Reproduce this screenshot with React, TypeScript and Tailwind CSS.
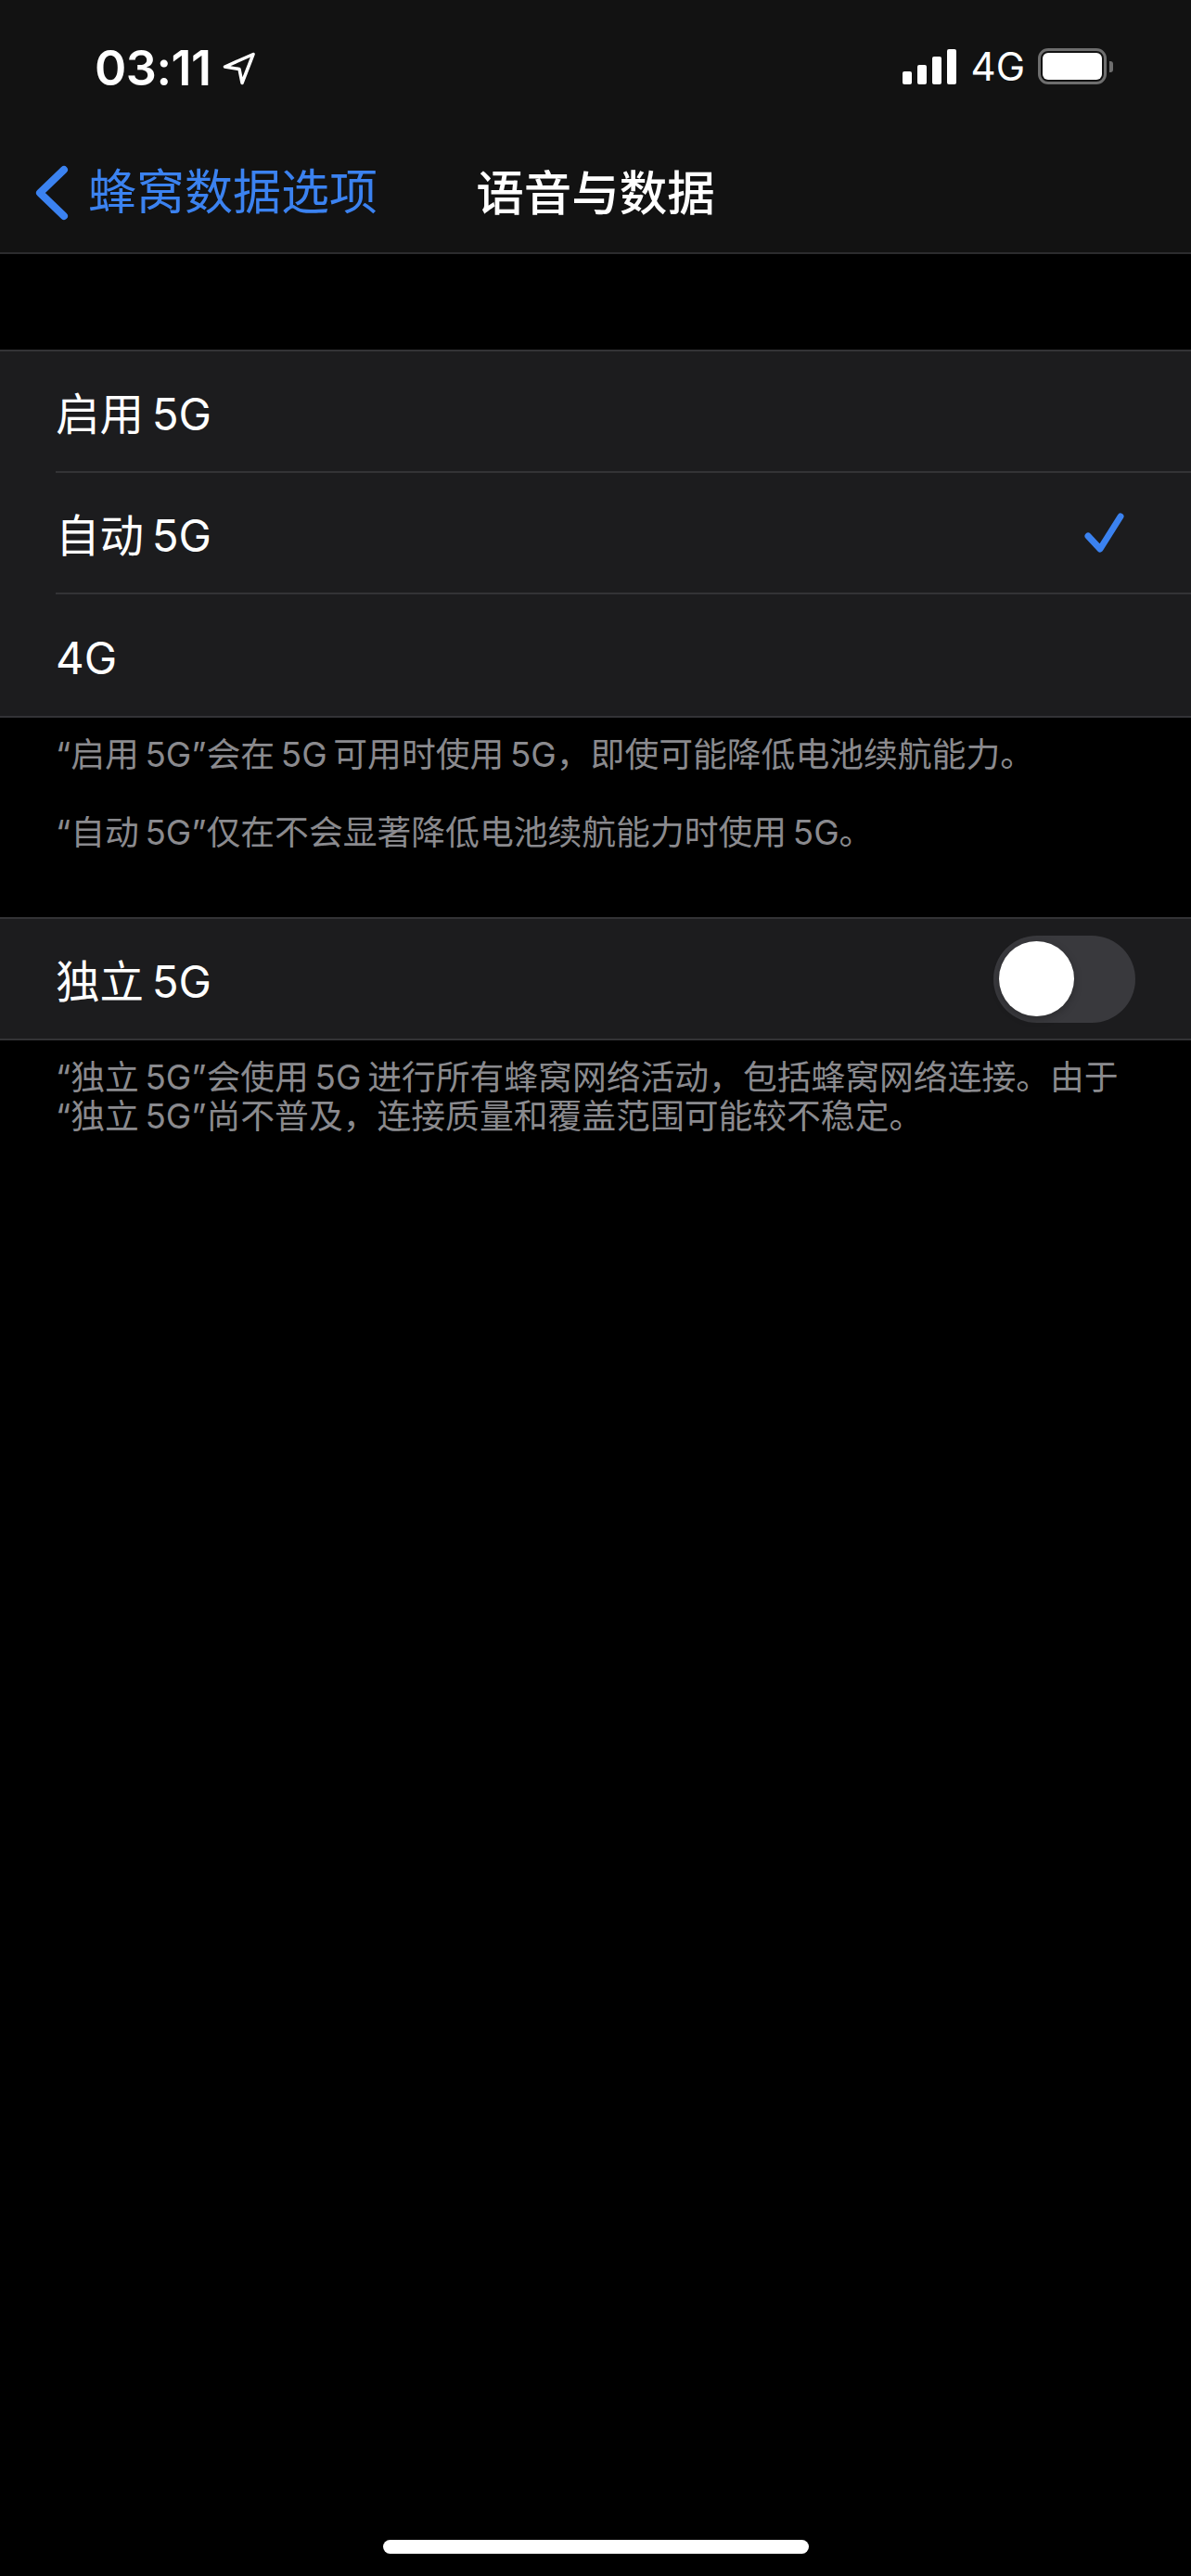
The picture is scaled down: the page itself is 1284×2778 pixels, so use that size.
import React from "react";

const THIN = "\u2009";

const Row = ({
  label,
  last,
  short,
  children,
}: {
  label: string;
  last?: boolean;
  short?: boolean;
  children?: React.ReactNode;
}) => (
  <div className="pl-[60px]">
    <div
      className={`flex items-center justify-between pr-[60px] text-[47.5px] text-white ${
        short ? "h-[129px]" : "h-[131px]"
      } ${last ? "" : "border-b-2 border-[#333336]"}`}
    >
      <span className="pt-[6px]">{label}</span>
      {children}
    </div>
  </div>
);

const Footnote = ({ children }: { children: React.ReactNode }) => (
  <p className="pl-[60px] text-[36.8px] leading-[42px] text-[#8a8a8e]">{children}</p>
);

const StatusBar = () => (
  <div className="flex h-[144px] items-start justify-between pl-[102px] pr-[84px] pt-[52px] text-white">
    <div className="flex items-center gap-[12px]">
      <span className="text-[52px] font-semibold leading-[44px] tracking-[-0.5px]">03:11</span>
      <svg width="38" height="38" viewBox="0 0 38 38" fill="none">
        <path
          d="M34 3.5 3.5 17 19 19.5l3 15Z"
          stroke="white"
          strokeWidth="3.5"
          strokeLinejoin="round"
        />
      </svg>
    </div>
    <div className="flex items-center">
      <div className="flex h-[38px] items-end gap-[6px]">
        <div className="h-[14px] w-[10px] rounded-[2px] bg-white" />
        <div className="h-[21px] w-[10px] rounded-[2px] bg-white" />
        <div className="h-[30px] w-[10px] rounded-[2px] bg-white" />
        <div className="h-[38px] w-[10px] rounded-[2px] bg-white" />
      </div>
      <span className="ml-[16px] text-[42px] leading-[38px]">4G</span>
      <div className="ml-[14px] flex items-center">
        <div className="h-[39px] w-[74px] rounded-[11px] border-[3px] border-[#6e6e6e] p-[2px]">
          <div className="h-full w-full rounded-[6px] bg-white" />
        </div>
        <div className="ml-[3px] h-[12px] w-[4px] rounded-r-[3px] bg-[#6e6e6e]" />
      </div>
    </div>
  </div>
);

const NavBar = () => (
  <div className="grid h-[130px] grid-cols-[1fr_auto_1fr] items-center border-b-2 border-[#2c2c2e] text-[51.5px] leading-[64px]">
    <div className="flex items-center pl-[36px] text-[#3b82f0]">
      <svg width="38" height="60" viewBox="0 0 38 60" fill="none">
        <path
          d="M33 5 7 30l26 25"
          stroke="#3b82f0"
          strokeWidth="8"
          strokeLinecap="round"
          strokeLinejoin="round"
        />
      </svg>
      <span className="ml-[21px] text-[52px]">蜂窝数据选项</span>
    </div>
    <div className="font-medium text-white">语音与数据</div>
    <div />
  </div>
);

export default function App() {
  return (
    <div
      className="flex min-h-[2778px] w-[1284px] flex-col bg-black"
      style={{ fontFamily: "Inter, 'Noto Sans CJK SC', sans-serif" }}
    >
      <header className="bg-[#121212]">
        <StatusBar />
        <NavBar />
      </header>

      <main className="flex-1 pt-[103px]">
        <section className="border-y-2 border-[#333336] bg-[#1c1c1e]">
          <Row label={`启用${THIN}5G`} />
          <Row label={`自动${THIN}5G`}>
            <svg width="48" height="46" viewBox="0 0 48 46" fill="none" className="mr-[9px]">
              <path
                d="M6 26l13 14L41 5"
                stroke="#3b82f0"
                strokeWidth="7"
                strokeLinecap="round"
                strokeLinejoin="round"
              />
            </svg>
          </Row>
          <Row label="4G" last />
        </section>

        <div className="pt-[19px]">
          <Footnote>
            “启用{THIN}5G”会在{THIN}5G{THIN}可用时使用{THIN}5G，即使可能降低电池续航能力。
          </Footnote>
          <div className="mt-[42px]">
            <Footnote>“自动{THIN}5G”仅在不会显著降低电池续航能力时使用{THIN}5G。</Footnote>
          </div>
        </div>

        <section className="mt-[70px] border-y-2 border-[#333336] bg-[#1c1c1e]">
          <Row label={`独立${THIN}5G`} last short>
            <div className="flex h-[94px] w-[153px] items-center rounded-full bg-[#39393d] pl-[6px]">
              <div className="h-[81px] w-[81px] rounded-full bg-white shadow-[0_3px_8px_rgba(0,0,0,0.25)]" />
            </div>
          </Row>
        </section>

        <div className="pt-[19px]">
          <Footnote>
            “独立{THIN}5G”会使用{THIN}5G{THIN}进行所有蜂窝网络活动，包括蜂窝网络连接。由于
            <br />
            “独立{THIN}5G”尚不普及，连接质量和覆盖范围可能较不稳定。
          </Footnote>
        </div>
      </main>

      <div className="flex justify-center pb-[24px]">
        <div className="h-[15px] w-[459px] rounded-full bg-white" />
      </div>
    </div>
  );
}
